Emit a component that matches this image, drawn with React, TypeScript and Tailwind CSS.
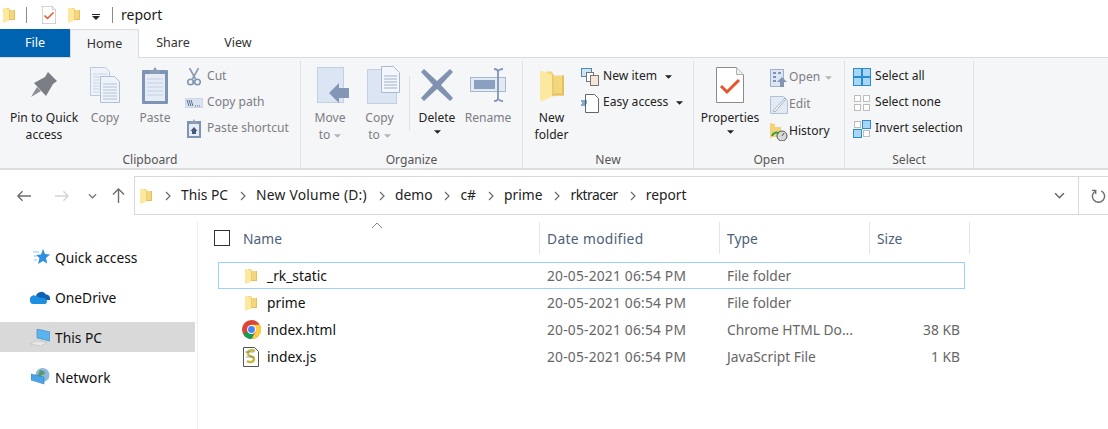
import type { ReactNode } from "react";

const FONT = "font-['Noto_Sans','Open_Sans',sans-serif]";

function Folder({ className = "w-3 h-4" }: { className?: string }) {
  return (
    <svg viewBox="0 0 12 16" className={className}>
      <path d="M3 1h3l1 2h5v10H3z" fill="#f4d67e" />
      <path d="M11 3h1v10H3v-1h8z" fill="#e6c05c" />
      <path d="M0 .5L6 2.500v11L.8 16 0 15z" fill="#fde89f" />
      <path d="M6 2.500h.8v10.800l-.8.2z" fill="#e9c96e" />
    </svg>
  );
}

function Caret({ light = false }: { light?: boolean }) {
  return (
    <svg viewBox="0 0 8 4" className="inline-block w-[7px] h-1 ml-1 align-middle">
      <path d="M0 0h8L4 4z" fill={light ? "#b4b4b4" : "#222"} />
    </svg>
  );
}

function Sep() {
  return <div className="w-px h-4 bg-[#8a8a8a]" />;
}

function PropsIcon({ className }: { className: string }) {
  return (
    <svg viewBox="0 0 28 36" className={className}>
      <path d="M.5.5h20l7 7v28H.5z" fill="#fff" stroke="#8c8c8c" />
      <path d="M20.500.5v7h7" fill="#efefef" stroke="#b0b0b0" />
      <path d="M5 19l6 6L23 13" fill="none" stroke="#e2562a" strokeWidth="3" />
    </svg>
  );
}

function TitleBar() {
  return (
    <div className="h-[29px] flex items-center pl-[3px] bg-white">
      <Folder className="w-3 h-4" />
      <div className="w-[11px]" />
      <Sep />
      <PropsIcon className="w-[14px] h-[18px] ml-[15px]" />
      <Folder className="w-3 h-4 ml-3" />
      <svg viewBox="0 0 8 6" className="w-2 h-[6px] ml-3 mt-1">
        <path d="M0 0h8v1H0zM0 2h8L4 6z" fill="#222" />
      </svg>
      <div className="w-3" />
      <Sep />
      <div className="ml-2 text-[14px] text-[#1a1a1a]">report</div>
    </div>
  );
}

function Tabs() {
  return (
    <div className="h-[29px] flex bg-white text-[12.5px] border-b border-[#dadbdc]">
      <div className="w-[70px] h-[28px] bg-[#0063b1] text-white flex items-center justify-center">File</div>
      <div className="w-[69px] h-[29px] bg-[#f5f6f7] border-x border-t border-[#dadbdc] flex items-center justify-center text-[#333]">Home</div>
      <div className="w-[68px] flex items-center justify-center text-[#333]">Share</div>
      <div className="w-[62px] flex items-center justify-center text-[#333]">View</div>
    </div>
  );
}

function BigBtn({
  icon,
  lines,
  w,
  off = false,
  caret,
}: {
  icon: ReactNode;
  lines: ReactNode[];
  w: string;
  off?: boolean;
  caret?: boolean;
}) {
  return (
    <div className={`${w} flex flex-col items-center text-[12.1px] leading-[17px] ${off ? "text-[#7d7d85]" : "text-[#222]"}`}>
      <div className="h-[48px] flex items-center justify-center">{icon}</div>
      {lines.map((l, i) => (
        <div key={i} className="whitespace-nowrap">{l}</div>
      ))}
      {caret && (
        <svg viewBox="0 0 8 4" className="w-[7px] h-1 mt-[4px]">
          <path d="M0 0h8L4 4z" fill="#222" />
        </svg>
      )}
    </div>
  );
}

function SmallBtn({
  icon,
  label,
  off = false,
  tail,
  tight = false,
}: {
  icon: ReactNode;
  label: string;
  off?: boolean;
  tail?: ReactNode;
  tight?: boolean;
}) {
  return (
    <div className={`flex items-center ${tight ? "gap-px" : "gap-1"} text-[12.1px] whitespace-nowrap ${off ? "text-[#7d7d85]" : "text-[#222]"}`}>
      <div className="w-[19px] h-[19px] flex items-center justify-center shrink-0">{icon}</div>
      <span>{label}</span>
      {tail}
    </div>
  );
}

function Group({ w, label, children }: { w: string; label: string; children: ReactNode }) {
  return (
    <div className={`${w} h-[107px] shrink-0 border-r border-[#e1e2e3] flex flex-col`}>
      <div className="h-[90px] flex">{children}</div>
      <div className="text-center text-[12.1px] leading-[17px] text-[#555]">{label}</div>
    </div>
  );
}

function Grid4({ pattern }: { pattern: string[] }) {
  const pos = [
    [0, 0],
    [9, 0],
    [0, 9],
    [9, 9],
  ];
  return (
    <svg viewBox="0 0 18 18" className="w-[18px] h-[18px]">
      {pos.map(([x, y], i) =>
        pattern[i] === "on" ? (
          <rect key={i} x={x + 0.5} y={y + 0.5} width="8" height="8" fill="#a9d6f7" stroke="#2a8dd4" />
        ) : (
          <rect key={i} x={x + 1.5} y={y + 1.5} width="6" height="6" fill="#fff" stroke="#bdbdbd" />
        )
      )}
    </svg>
  );
}

function Ribbon() {
  return (
    <div className="h-[112px] bg-[#f5f6f7] border-b-2 border-[#dcdddd] flex pt-[3px]">
      <Group w="w-[301px]" label="Clipboard">
        <div className="w-2" />
        <BigBtn
          w="w-[72px]"
          lines={["Pin to Quick", "access"]}
          icon={
            <svg viewBox="0 0 26 26" className="w-[26px] h-[26px]">
              <path d="M17 0l9 9-4 3-7 12L3 11l11-6z" fill="#7b7f85" />
              <path d="M6 15L0 25l10-6z" fill="#8b8f95" />
            </svg>
          }
        />
        <BigBtn
          w="w-[50px]"
          off
          lines={["Copy"]}
          icon={
            <svg viewBox="0 0 30 36" className="w-[30px] h-9">
              <path d="M.5.5h15l4 4v24H.5z" fill="#eef2f9" stroke="#bccadf" />
              <path d="M3 7h14M3 10h14M3 13h7M3 16h7M3 19h7M3 22h7M3 25h7" stroke="#cbd6e8" />
              <path d="M10.500 9.500h14l5 5v21h-19z" fill="#eef2f9" stroke="#aebfd8" />
              <path d="M13 17h14M13 20h14M13 23h14M13 26h14M13 29h14M13 32h14" stroke="#b3c2d9" />
            </svg>
          }
        />
        <BigBtn
          w="w-[50px]"
          off
          lines={["Paste"]}
          icon={
            <svg viewBox="0 0 26 37" className="w-[26px] h-[37px]">
              <rect x="0" y="3" width="26" height="34" rx="1" fill="#7f93b4" />
              <rect x="3" y="7" width="20" height="27" fill="#e6ecf6" />
              <path d="M5 12h16M5 16h16M5 20h16M5 24h16M5 28h16" stroke="#c2cfe3" />
              <path d="M8 3h3l2-3 2 3h3v4H8z" fill="#8c9dbb" />
            </svg>
          }
        />
        <div className="flex flex-col gap-[7px] pt-[6px] ml-[4px]">
          <SmallBtn
            off
            label="Cut"
            icon={
              <svg viewBox="0 0 14 18" className="w-[14px] h-[18px]">
                <path d="M2.500 0l6 11M11.500 0l-6 11" stroke="#8b9ab2" strokeWidth="1.600" fill="none" />
                <circle cx="3.500" cy="14" r="2.800" fill="none" stroke="#7f93b4" strokeWidth="1.600" />
                <circle cx="10.500" cy="14" r="2.800" fill="none" stroke="#7f93b4" strokeWidth="1.600" />
              </svg>
            }
          />
          <SmallBtn
            off
            label="Copy path"
            icon={
              <svg viewBox="0 0 18 10" className="w-[18px] h-[10px]">
                <rect x="0" y="0" width="18" height="10" fill="#d9e2f0" stroke="#c2cfe3" />
                <path d="M2 2l2 6M4 2l2 6M6 2l2 6" stroke="#5d6e8b" />
                <path d="M10 8h1M12 8h1M14 8h1" stroke="#5d6e8b" />
              </svg>
            }
          />
          <SmallBtn
            off
            label="Paste shortcut"
            icon={
              <svg viewBox="0 0 14 19" className="w-[14px] h-[19px]">
                <rect x="0" y="2" width="14" height="17" fill="#7f93b4" />
                <rect x="2" y="5" width="10" height="12" fill="#e6ecf6" />
                <path d="M4 2h2l1-2 1 2h2v3H4z" fill="#8c9dbb" />
                <path d="M5 15v-3H3.500L7 8l3.500 4H9v3z" fill="#46597a" />
              </svg>
            }
          />
        </div>
      </Group>
      <Group w="w-[222px]" label="Organize">
        <div className="w-[4px]" />
        <BigBtn
          w="w-[50px]"
          off
          lines={["Move", <span key="t">to<Caret light /></span>]}
          icon={
            <svg viewBox="0 0 32 37" className="w-8 h-[37px] ml-[6px]">
              <rect x=".5" y=".5" width="26" height="35" fill="#dce5f3" stroke="#c3d0e4" />
              <path d="M12 26l10-10v5h10v10H22v5z" fill="#8296b6" />
            </svg>
          }
        />
        <BigBtn
          w="w-[49px]"
          off
          lines={["Copy", <span key="t">to<Caret light /></span>]}
          icon={
            <svg viewBox="0 0 33 38" className="w-[33px] h-[38px] ml-2">
              <rect x=".5" y="3.500" width="29" height="34" fill="#dce5f3" stroke="#c3d0e4" />
              <path d="M14.500.5h12l6 6v20h-18z" fill="#f3f6fb" stroke="#a8b8d0" />
              <path d="M17 10h13M17 13h13M17 16h13M17 19h13M17 22h13" stroke="#9fb0ca" />
            </svg>
          }
        />
        <div className="w-px h-[55px] bg-[#e1e2e3] mt-[15px] ml-[5px] mr-[1px]" />
        <BigBtn
          w="w-[52px]"
          lines={["Delete"]}
          caret
          icon={
            <svg viewBox="0 0 32 32" className="w-8 h-8">
              <path d="M3 0L16 12 29 0l3 3-12 13 12 13-3 3-13-12L3 32l-3-3 12-13L0 3z" fill="#8092b0" />
            </svg>
          }
        />
        <BigBtn
          w="w-[50px]"
          off
          lines={["Rename"]}
          icon={
            <svg viewBox="0 0 36 34" className="w-9 h-[34px]">
              <rect x=".5" y="9.500" width="35" height="14" fill="#e4eaf4" stroke="#a8b8d0" />
              <rect x="4" y="12" width="21" height="9" fill="#8aa0c0" />
              <path d="M24 1c2 0 4 1 4 3v26c0 2-2 3-4 3M33 1c-2 0-5 1-5 3v26c0 2 3 3 5 3" stroke="#8296b6" strokeWidth="1.800" fill="none" />
            </svg>
          }
        />
      </Group>
      <Group w="w-[171px]" label="New">
        <BigBtn w="w-[57px]" lines={["New", "folder"]} icon={<Folder className="w-6 h-[35px]" />} />
        <div className="flex flex-col gap-[7px] pt-[6px]">
          <SmallBtn
            label="New item"
            tail={<Caret />}
            icon={
              <svg viewBox="0 0 18 18" className="w-[18px] h-[18px]">
                <rect x=".5" y=".5" width="10" height="8" fill="#cfe3f5" stroke="#4b8db8" />
                <rect x="5.500" y="4.500" width="7" height="9" fill="#fff" stroke="#777" />
                <rect x="9.500" y="7.500" width="8" height="10" fill="#f6e6d8" stroke="#777" />
              </svg>
            }
          />
          <SmallBtn
            label="Easy access"
            tail={<Caret />}
            icon={
              <svg viewBox="0 0 18 20" className="w-[18px] h-5">
                <path d="M4.500 1.500h9l4 4v14h-13z" fill="#fff" stroke="#666" />
                <path d="M0 8h6M1 10h5M0 12h5" stroke="#1f5f9e" />
              </svg>
            }
          />
        </div>
      </Group>
      <Group w="w-[151px]" label="Open">
        <BigBtn w="w-[72px]" lines={["Properties"]} caret icon={<PropsIcon className="w-7 h-9" />} />
        <div className="flex flex-col gap-[8px] pt-[7px] ml-[3px]">
          <SmallBtn
            off
            tight
            label="Open"
            tail={<Caret light />}
            icon={
              <svg viewBox="0 0 18 18" className="w-[18px] h-[18px]">
                <rect x=".5" y=".5" width="13" height="17" fill="#dce5f3" stroke="#9fb0ca" />
                <path d="M3 4h3M8 4h3M3 8h3M3 12h3" stroke="#7f93b4" strokeWidth="2" />
                <path d="M12 8l5 5h-3v5h-4v-5H7z" fill="#8296b6" />
              </svg>
            }
          />
          <SmallBtn
            off
            tight
            label="Edit"
            icon={
              <svg viewBox="0 0 18 18" className="w-[18px] h-[18px]">
                <path d="M.5.500h13l4 4v13H.5z" fill="#e4eaf4" stroke="#b2c0d6" />
                <path d="M3 15L15 2l1 1L5 16z" fill="#fff" stroke="#9fb0ca" />
              </svg>
            }
          />
          <SmallBtn
            tight
            label="History"
            icon={
              <svg viewBox="0 0 18 18" className="w-[18px] h-[18px]">
                <path d="M0 0l5 1v3h6v10H2l-2 2z" fill="#f3d27a" />
                <circle cx="12" cy="13" r="5" fill="#d8d8d8" stroke="#555" />
                <path d="M2 13a5 5 0 0 1 7-3" fill="none" stroke="#2f9e44" strokeWidth="2" />
                <path d="M12 13l2-3" stroke="#555" />
              </svg>
            }
          />
        </div>
      </Group>
      <Group w="w-[129px]" label="Select">
        <div className="w-[7px]" />
        <div className="flex flex-col gap-[7px] pt-[6px]">
          <SmallBtn label="Select all" icon={<Grid4 pattern={["on", "on", "on", "on"]} />} />
          <SmallBtn label="Select none" icon={<Grid4 pattern={["off", "off", "off", "off"]} />} />
          <SmallBtn label="Invert selection" icon={<Grid4 pattern={["off", "on", "on", "off"]} />} />
        </div>
      </Group>
    </div>
  );
}

function Chev() {
  return (
    <svg viewBox="0 0 6 10" className="w-[6px] h-[10px]">
      <path d="M1 1l4 4-4 4" fill="none" stroke="#6b6b6b" strokeWidth="1.200" />
    </svg>
  );
}

function AddressBar() {
  const crumbs: [string, string][] = [
    ["This PC", ""],
    ["New Volume (D:)", "tracking-[0.25px]"],
    ["demo", ""],
    ["c#", ""],
    ["prime", ""],
    ["rktracer", "tracking-[-0.5px]"],
    ["report", ""],
  ];
  return (
    <div className="h-[39px] mt-[6px] flex items-center text-[13.8px]">
      <div className="w-[134px] flex items-center pl-[16px] shrink-0">
        <svg viewBox="0 0 16 14" className="w-[15px] h-[14px]">
          <path d="M16 7H2M7 2L2 7l5 5" fill="none" stroke="#6e6e6e" strokeWidth="1.500" />
        </svg>
        <svg viewBox="0 0 16 14" className="w-[15px] h-[14px] ml-[24px]">
          <path d="M0 7h14M9 2l5 5-5 5" fill="none" stroke="#d4d4d4" strokeWidth="1.500" />
        </svg>
        <svg viewBox="0 0 10 6" className="w-[9px] h-[6px] ml-[18px]">
          <path d="M1 1l4 4 4-4" fill="none" stroke="#777" strokeWidth="1.400" />
        </svg>
        <svg viewBox="0 0 14 16" className="w-[13px] h-[15px] ml-[15px]">
          <path d="M7 16V2M1 7l6-6 6 6" fill="none" stroke="#6e6e6e" strokeWidth="1.500" />
        </svg>
      </div>
      <div className="flex-1 h-full border-y border-l border-[#d9d9d9] flex items-center pl-[5px]">
        <Folder className="w-3 h-4" />
        <div className="w-[13px]" />
        {crumbs.map(([t, extra]) => (
          <div key={t} className="flex items-center">
            <Chev />
            <span className={`ml-[10px] mr-[12px] text-[#222] whitespace-nowrap ${extra}`}>{t}</span>
          </div>
        ))}
        <div className="flex-1" />
        <svg viewBox="0 0 10 6" className="w-[11px] h-[7px] mr-[13px]">
          <path d="M1 1l4 4 4-4" fill="none" stroke="#666" strokeWidth="1.400" />
        </svg>
        <div className="w-[30px] h-full border-l border-[#d9d9d9] flex items-center justify-end pr-[2px]">
          <svg viewBox="0 0 16 16" className="w-[15px] h-[15px]">
            <path d="M5 2.500A6.500 6.500 0 1 0 11 2.500M5 6V2H1" transform="translate(0 .5)" fill="none" stroke="#6e6e6e" strokeWidth="1.500" />
          </svg>
        </div>
      </div>
    </div>
  );
}

function Sidebar() {
  const items: [string, ReactNode, boolean][] = [
    [
      "Quick access",
      <svg key="q" viewBox="0 0 17 16" className="w-[17px] h-4">
        <path d="M10 0l2 5 5 .5-4 3.500 1.300 5.500L10 12l-5 3 1.500-6L3 6l5-.5z" fill="#2f8fe0" />
        <path d="M0 3h6M1 7h3M1 11h3" stroke="#8cc4ee" />
      </svg>,
      false,
    ],
    [
      "OneDrive",
      <svg key="o" viewBox="0 0 20 13" className="w-5 h-[13px]">
        <path d="M6 5a5.500 5.500 0 0 1 10-1.500A4 4 0 0 1 20 8v1H8z" fill="#0f5fb3" />
        <path d="M0 9.500A4 4 0 0 1 6 5c2 .5 3 1 4 2 3-1 6 0 7 3 0 2-1 3-2 3H3c-2 0-3-1.500-3-3.500z" fill="#1d8fe1" />
      </svg>,
      false,
    ],
    [
      "This PC",
      <svg key="p" viewBox="0 0 20 17" className="w-5 h-[17px]">
        <path d="M7 0l13 3v9L7 9z" fill="#5cb4ee" stroke="#3a86c0" strokeWidth=".6" />
        <path d="M0 15l6-3 11 1-6 4z" fill="#e8e8e8" stroke="#bdbdbd" strokeWidth=".6" />
      </svg>,
      true,
    ],
    [
      "Network",
      <svg key="n" viewBox="0 0 19 18" className="w-[19px] h-[18px]">
        <circle cx="11.500" cy="7" r="7" fill="#8fb8de" />
        <path d="M9 2l4 1 1 3-3 1-2 3-2-3z" fill="#5b9a6b" />
        <path d="M0 6l13 3v7L0 12z" fill="#46a5e6" stroke="#2f78ad" strokeWidth=".5" />
      </svg>,
      false,
    ],
  ];
  return (
    <div className="w-[198px] shrink-0 mt-[7px] h-[207px] pt-[20px] border-r border-[#f0f0f0]">
      {items.map(([label, icon, sel]) => (
        <div key={label} className={`h-[30px] w-[195px] mb-[10px] flex items-center text-[13.8px] text-[#111] ${sel ? "bg-[#d9d9d9]" : ""}`}>
          <div className="w-[55px] pr-[5px] flex justify-end shrink-0">{icon}</div>
          <span className="pt-[2px]">{label}</span>
        </div>
      ))}
    </div>
  );
}

const COLS = "grid grid-cols-[322px_180px_150px_100px]";

function FileList() {
  const rows: [ReactNode, string, string, string][] = [
    [<Folder key="a" className="w-3 h-4" />, "_rk_static", "File folder", ""],
    [<Folder key="b" className="w-3 h-4" />, "prime", "File folder", ""],
    [
      <svg key="c" viewBox="0 0 20 20" className="w-[19px] h-[19px]">
        <circle cx="10" cy="10" r="10" fill="#db4437" />
        <path d="M10 10L1.300 15A10 10 0 0 0 10 20a10 10 0 0 0 3-.5z" fill="#0f9d58" />
        <path d="M10 5h8.700A10 10 0 0 1 10 20l4.300-7.500z" fill="#ffcd40" />
        <circle cx="10" cy="10" r="4.700" fill="#fff" />
        <circle cx="10" cy="10" r="3.600" fill="#4285f4" />
      </svg>,
      "index.html",
      "Chrome HTML Do...",
      "38 KB",
    ],
    [
      <svg key="d" viewBox="0 0 16 20" className="w-4 h-5">
        <path d="M.5.500h11l4 4v15H.5z" fill="#fff" stroke="#555" />
        <path d="M12 4c-4-2-8 0-7 3s6 2 6 5-4 4-7 2" fill="none" stroke="#c4b93c" strokeWidth="2.400" />
        <path d="M2 5h9M3 10h8" stroke="#666" strokeWidth=".6" />
      </svg>,
      "index.js",
      "JavaScript File",
      "1 KB",
    ],
  ];
  return (
    <div className="flex-1 pl-[20px] text-[13.8px]">
      <div className={`${COLS} h-[32px] mt-[7px] items-center text-[#4c607a] relative`}>
        <div className="flex items-center h-full -ml-[4px] border-r border-[#e5e5e5]">
          <div className="w-4 h-4 border border-[#333] mr-[13px]" />
          <span className="pt-[2px]">Name</span>
          <svg viewBox="0 0 10 5" className="absolute left-[154px] top-[1px] w-[10px] h-[5px]">
            <path d="M0 5l5-5 5 5" fill="none" stroke="#888" />
          </svg>
        </div>
        <div className="h-full flex items-center pl-[7px] pt-[2px] border-r border-[#e5e5e5] tracking-[0.35px]">Date modified</div>
        <div className="h-full flex items-center pl-[7px] pt-[2px] border-r border-[#e5e5e5]">Type</div>
        <div className="h-full flex items-center pl-[7px] pt-[2px] border-r border-[#e5e5e5]">Size</div>
      </div>
      <div className="mt-[8px] w-[747px]">
        {rows.map(([icon, name, type, size], i) => (
          <div key={name} className={`h-[27px] flex items-center ${i === 0 ? "border border-[#99d1ff]" : ""}`}>
            <div className={`${i === 0 ? "w-[42px]" : "w-[43px]"} flex justify-end shrink-0`}>
              <div className="w-[20px] flex justify-center">{icon}</div>
            </div>
            <span className="w-[286px] pl-[6px] pt-[2px] text-[#111]">{name}</span>
            <span className="w-[180px] pt-[2px] text-[#666] tracking-[0.2px]">20-05-2021 06:54 PM</span>
            <span className="w-[150px] pt-[2px] text-[#666]">{type}</span>
            <span className="w-[83px] pt-[2px] text-right text-[#666]">{size}</span>
          </div>
        ))}
      </div>
    </div>
  );
}

export default function App() {
  return (
    <div className={`w-[1108px] h-[429px] overflow-hidden bg-white ${FONT}`}>
      <TitleBar />
      <Tabs />
      <Ribbon />
      <AddressBar />
      <div className="flex">
        <Sidebar />
        <FileList />
      </div>
    </div>
  );
}
